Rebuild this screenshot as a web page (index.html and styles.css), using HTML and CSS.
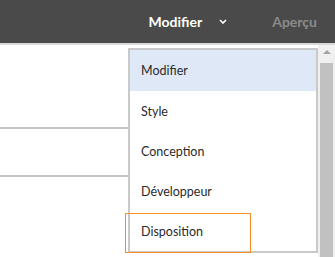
FILE: index.html
```html
<!DOCTYPE html>
<html lang="fr">
<head>
<meta charset="utf-8">
<link rel="stylesheet" href="styles.css">
</head>
<body>
<header class="topbar">
  <span class="tab tab-active">Modifier</span>
  <svg class="chevron" width="8" height="5" viewBox="0 0 8 5"><path d="M1 1 L4 4 L7 1" fill="none" stroke="#ffffff" stroke-width="1.6"/></svg>
  <span class="tab tab-muted">Aperçu</span>
</header>
<div class="main">
  <div class="content">
    <div class="section section-a"></div>
    <div class="section section-b"></div>
  </div>
  <div class="scrollbar">
    <div class="scroll-arrow"></div>
    <div class="scroll-thumb"></div>
  </div>
  <ul class="menu">
    <li class="menu-item selected">Modifier</li>
    <li class="menu-item">Style</li>
    <li class="menu-item">Conception</li>
    <li class="menu-item">Développeur</li>
    <li class="menu-item">Disposition</li>
  </ul>
  <div class="focus-ring"></div>
</div>
</body>
</html>
```
FILE: styles.css
```css
html, body {
  margin: 0;
  padding: 0;
  background: #ffffff;
  font-family: Lato, "Open Sans", sans-serif;
  overflow: hidden;
}
.topbar {
  height: 43px;
  background: #4a4a4a;
  border-bottom: 2px solid #d9d9d9;
  display: flex;
  align-items: center;
  justify-content: flex-end;
  padding-right: 18px;
  box-sizing: content-box;
}
.tab {
  font-weight: 700;
  font-size: 14px;
}
.tab-active {
  color: #ffffff;
}
.chevron {
  margin-left: 17px;
  margin-right: 45px;
}
.tab-muted {
  color: #8a8a8a;
}
.main {
  position: relative;
  display: flex;
  height: 212px;
}
.content {
  flex: 1;
}
.section {
  border-bottom: 2px solid #c4c4c4;
}
.section-a {
  height: 82px;
}
.section-b {
  height: 46px;
}
.scrollbar {
  width: 17px;
  background: #f0f0f0;
  display: flex;
  flex-direction: column;
  align-items: center;
}
.scroll-arrow {
  margin-top: 5px;
  width: 0;
  height: 0;
  border-left: 4px solid transparent;
  border-right: 4px solid transparent;
  border-bottom: 4px solid #a3a3a3;
}
.scroll-thumb {
  margin-top: 9px;
  width: 13px;
  flex: 1;
  background: #c1c1c1;
}
.menu {
  position: absolute;
  left: 128px;
  top: 3px;
  width: 186px;
  margin: 0;
  padding: 0;
  list-style: none;
  background: #ffffff;
  border: 2px solid #c9c9c9;
}
.menu-item {
  height: 40px;
  display: flex;
  align-items: center;
  padding-left: 11px;
  font-size: 12.5px;
  color: #2b2b2b;
}
.menu-item.selected {
  height: 41px;
  background: #dfe8f6;
}
.focus-ring {
  position: absolute;
  left: 125px;
  top: 168px;
  width: 124px;
  height: 38px;
  border: 1px solid #f7901e;
}
```
